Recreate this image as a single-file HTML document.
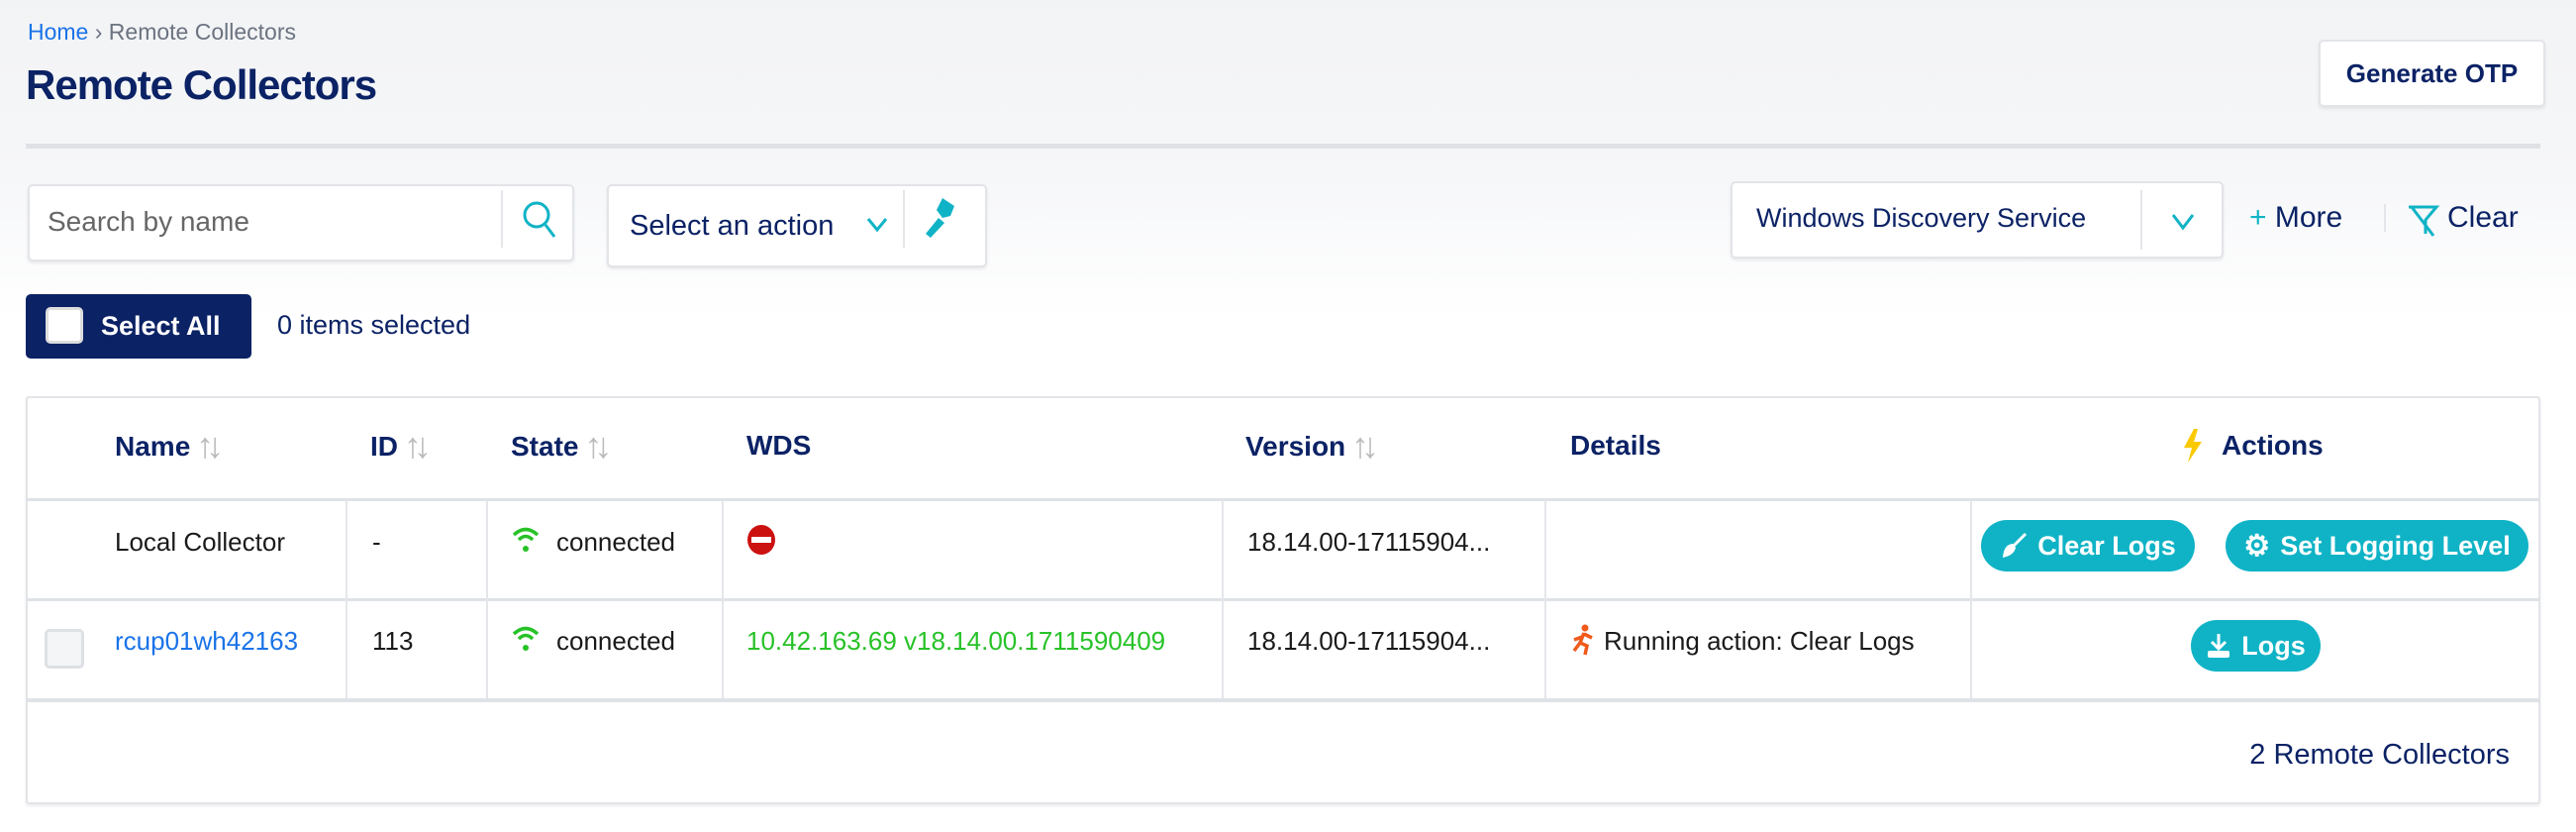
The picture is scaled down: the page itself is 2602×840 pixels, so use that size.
<!DOCTYPE html>
<html><head><meta charset="utf-8"><style>
*{box-sizing:border-box;margin:0;padding:0}
body{width:2602px;height:840px;overflow:hidden;font-family:"Liberation Sans",sans-serif;background:linear-gradient(#f2f3f5 0px,#f6f7f9 180px,#fff 320px);position:relative;color:#1a1a1a}
.a{position:absolute;white-space:nowrap}
.navy{color:#0b2265}
.box{position:absolute;background:#fff;border:2px solid #e2e4e8;border-radius:5px;box-shadow:0 2px 3px rgba(0,0,0,.08)}
.th{position:absolute;top:432px;font-weight:bold;font-size:28px;color:#0b2265;line-height:36px}
.srt{color:#bbb;font-weight:normal;font-size:36px;letter-spacing:-8px;margin-left:6px;vertical-align:-2px}
.td{position:absolute;font-size:26px;line-height:34px}
.btn{position:absolute;background:#10b3c6;color:#fff;font-weight:bold;font-size:27px;border-radius:26px;display:flex;align-items:center;justify-content:center;gap:10px}
.vl{position:absolute;width:2px;background:#e4e6ea}
.hl{position:absolute;left:26px;width:2540px;background:#dfe2e6}
</style></head><body>
<div class="a" style="left:28px;top:19px;font-size:23px;color:#6b7380"><span style="color:#1a73e8">Home</span> › Remote Collectors</div>
<div class="a navy" style="left:26px;top:62px;font-size:42px;font-weight:bold;letter-spacing:-1px">Remote Collectors</div>
<div class="box" style="left:2342px;top:40px;width:229px;height:68px;display:flex;align-items:center;justify-content:center;font-weight:bold;font-size:26px;color:#0b2265">Generate OTP</div>
<div style="position:absolute;left:26px;top:145px;width:2540px;height:5px;background:#dfe1e5"></div>

<div class="box" style="left:28px;top:186px;width:552px;height:78px"></div>
<div class="a" style="left:48px;top:208px;font-size:28px;color:#666">Search by name</div>
<div class="vl" style="left:506px;top:192px;height:58px"></div>
<svg class="a" style="left:527px;top:202px" width="36" height="40" viewBox="0 0 36 40"><circle cx="15" cy="15" r="12" fill="none" stroke="#10b3c6" stroke-width="3"/><path d="M24 25 L33 37" stroke="#10b3c6" stroke-width="3"/></svg>

<div class="box" style="left:613px;top:186px;width:384px;height:84px"></div>
<div class="a navy" style="left:636px;top:212px;font-size:29px">Select an action</div>
<svg class="a" style="left:874px;top:218px" width="24" height="18"><path d="M3 3 L12 14 L21 3" fill="none" stroke="#10b3c6" stroke-width="3"/></svg>
<div class="vl" style="left:912px;top:192px;height:58px"></div>
<svg class="a" style="left:932px;top:198px" width="40" height="46" viewBox="0 0 40 46"><path d="M20 2 L32 10 L28 20 L20 22 L14 14 Z" fill="#10b3c6"/><path d="M16 22 L22 27 L8 42 L3 38 Z" fill="#10b3c6"/></svg>

<div class="box" style="left:1748px;top:183px;width:498px;height:78px"></div>
<div class="a navy" style="left:1774px;top:205px;font-size:27px">Windows Discovery Service</div>
<div class="vl" style="left:2162px;top:192px;height:60px"></div>
<svg class="a" style="left:2192px;top:214px" width="26" height="20"><path d="M3 3 L13 16 L23 3" fill="none" stroke="#10b3c6" stroke-width="3"/></svg>
<div class="a navy" style="left:2272px;top:203px;font-size:30px"><span style="color:#10b3c6">+</span> More</div>
<div class="vl" style="left:2408px;top:206px;height:28px"></div>
<svg class="a" style="left:2430px;top:206px" width="36" height="34" viewBox="0 0 36 34"><path d="M3 3 H31 L20 16 V30" fill="none" stroke="#10b3c6" stroke-width="3"/><path d="M6 3 L28 32" stroke="#10b3c6" stroke-width="3"/></svg>
<div class="a navy" style="left:2472px;top:203px;font-size:30px">Clear</div>

<div style="position:absolute;left:26px;top:297px;width:228px;height:65px;background:#0b2265;border-radius:5px"></div>
<div style="position:absolute;left:46px;top:310px;width:38px;height:37px;background:#fff;border:3px solid #ddd;border-radius:5px"></div>
<div class="a" style="left:102px;top:314px;font-size:27px;color:#fff;font-weight:bold">Select All</div>
<div class="a navy" style="left:280px;top:313px;font-size:27px">0 items selected</div>

<div style="position:absolute;left:26px;top:400px;width:2540px;height:412px;background:#fff;border:2px solid #e2e4e8;border-radius:3px;box-shadow:0 2px 3px rgba(0,0,0,.08)"></div>
<div class="hl" style="top:503px;height:3px"></div>
<div class="hl" style="top:604px;height:3px"></div>
<div class="hl" style="top:705px;height:4px"></div>
<div class="vl" style="left:349px;top:505px;height:200px"></div>
<div class="vl" style="left:491px;top:505px;height:200px"></div>
<div class="vl" style="left:729px;top:505px;height:200px"></div>
<div class="vl" style="left:1234px;top:505px;height:200px"></div>
<div class="vl" style="left:1560px;top:505px;height:200px"></div>
<div class="vl" style="left:1990px;top:505px;height:200px"></div>

<div class="th" style="left:116px">Name<span class="srt">↑↓</span></div>
<div class="th" style="left:374px">ID<span class="srt">↑↓</span></div>
<div class="th" style="left:516px">State<span class="srt">↑↓</span></div>
<div class="th" style="left:754px">WDS</div>
<div class="th" style="left:1258px">Version<span class="srt">↑↓</span></div>
<div class="th" style="left:1586px">Details</div>
<svg class="a" style="left:2202px;top:432px" width="24" height="36" viewBox="0 0 24 36"><path d="M14 1 L4 20 H12 L8 35 L22 14 H14 L18 1 Z" fill="#fbc900"/></svg>
<div class="th" style="left:2244px">Actions</div>

<div class="td" style="left:116px;top:530px">Local Collector</div>
<div class="td" style="left:376px;top:530px">-</div>
<svg class="a" style="left:516px;top:530px" width="30" height="28" viewBox="0 0 30 28"><path d="M3 10 Q15 -1 27 10" fill="none" stroke="#27c227" stroke-width="3.5"/><path d="M8 15 Q15 8 22 15" fill="none" stroke="#27c227" stroke-width="3.5"/><circle cx="15" cy="24" r="3" fill="#27c227"/></svg>
<div class="td" style="left:562px;top:530px">connected</div>
<svg class="a" style="left:754px;top:529px" width="30" height="32"><ellipse cx="15" cy="16" rx="14" ry="15" fill="#cc1111"/><rect x="5" y="13" width="20" height="6" fill="#fff"/></svg>
<div class="td" style="left:1260px;top:530px">18.14.00-17115904...</div>
<div class="btn" style="left:2001px;top:525px;width:216px;height:52px"><svg width="28" height="28" viewBox="0 0 28 28"><path d="M26 2 L14 14" stroke="#fff" stroke-width="3"/><path d="M14 12 Q4 12 3 26 Q14 24 16 16 Z" fill="#fff"/></svg>Clear Logs</div>
<div class="btn" style="left:2248px;top:525px;width:306px;height:52px"><span style="font-size:30px">⚙</span>Set Logging Level</div>

<div style="position:absolute;left:45px;top:635px;width:40px;height:40px;background:#f4f5f6;border:3px solid #dde0e4;border-radius:5px"></div>
<div class="td" style="left:116px;top:630px;color:#1a73e8">rcup01wh42163</div>
<div class="td" style="left:376px;top:630px">113</div>
<svg class="a" style="left:516px;top:630px" width="30" height="28" viewBox="0 0 30 28"><path d="M3 10 Q15 -1 27 10" fill="none" stroke="#27c227" stroke-width="3.5"/><path d="M8 15 Q15 8 22 15" fill="none" stroke="#27c227" stroke-width="3.5"/><circle cx="15" cy="24" r="3" fill="#27c227"/></svg>
<div class="td" style="left:562px;top:630px">connected</div>
<div class="td" style="left:754px;top:630px;color:#27c227">10.42.163.69 v18.14.00.1711590409</div>
<div class="td" style="left:1260px;top:630px">18.14.00-17115904...</div>
<svg class="a" style="left:1586px;top:630px" width="26" height="32" viewBox="0 0 26 32"><circle cx="15" cy="4" r="3.5" fill="#f05a1a"/><path d="M14 9 L10 19 L17 22 L15 31 M12 13 L4 16 M14 10 L22 14 M10 19 L4 27" fill="none" stroke="#f05a1a" stroke-width="3.5"/></svg>
<div class="td" style="left:1620px;top:630px">Running action: Clear Logs</div>
<div class="btn" style="left:2213px;top:626px;width:131px;height:52px"><svg width="26" height="28" viewBox="0 0 26 28"><path d="M13 2 V16 M6 10 L13 17 L20 10" fill="none" stroke="#fff" stroke-width="3"/><rect x="2" y="19" width="22" height="7" rx="2" fill="#fff"/></svg>Logs</div>

<div class="a navy" style="right:67px;top:746px;font-size:29px">2 Remote Collectors</div>
</body></html>
